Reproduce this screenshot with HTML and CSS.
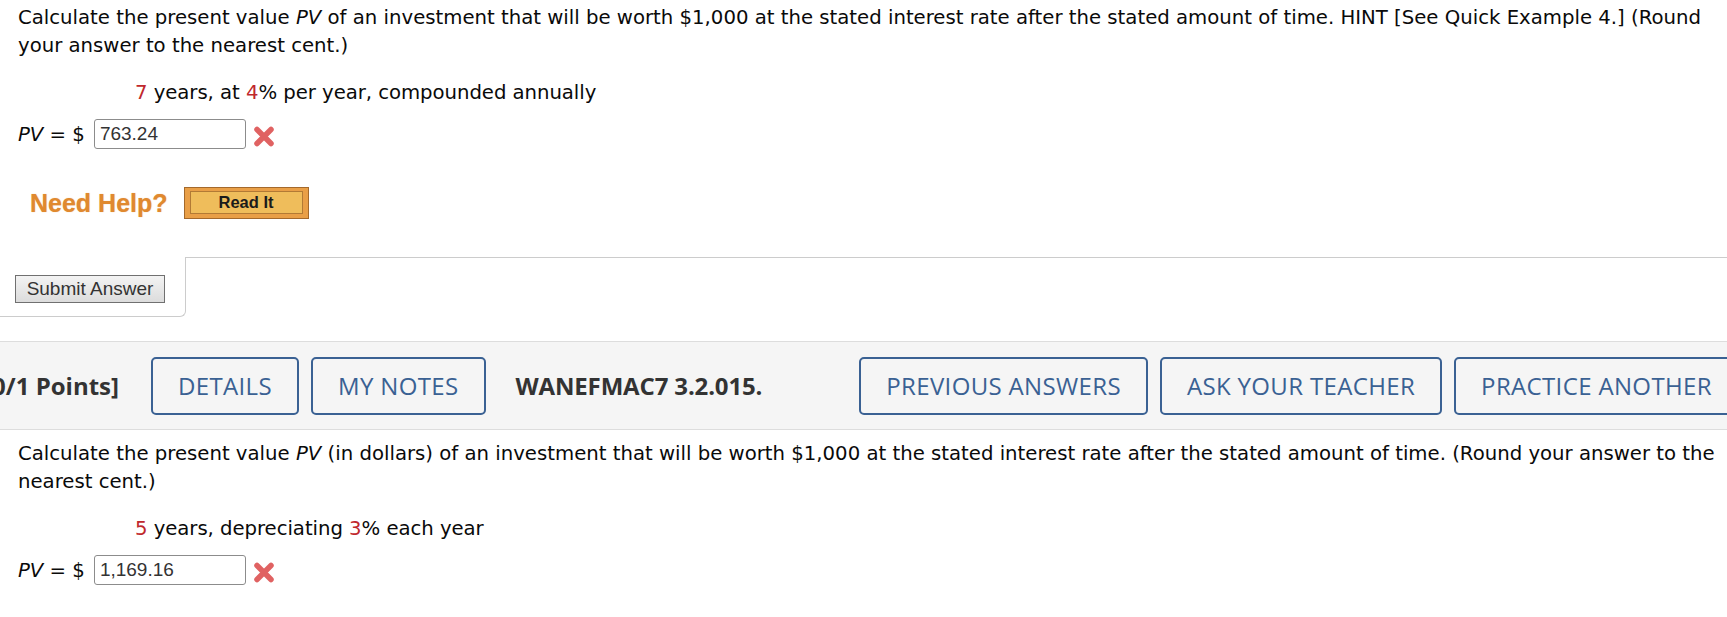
FILE: index.html
```html
<!DOCTYPE html>
<html lang="en">
<head>
<meta charset="utf-8">
<title>Present value questions</title>
<link rel="stylesheet" href="styles.css">
</head>
<body>
<section class="question q1">
  <p class="prompt">Calculate the present value <i>PV</i> of an investment that will be worth $1,000 at the stated interest rate after the stated amount of time. HINT [See Quick Example 4.] (Round your answer to the nearest cent.)</p>
  <p class="given"><span class="num">7</span> years, at <span class="num">4</span>% per year, compounded annually</p>
  <div class="answer-row">
    <span class="pv-label"><i>PV</i> = $</span>
    <span class="answer-input">763.24</span>
    <svg class="wrong-icon" width="22" height="21" viewBox="0 0 22 21" aria-hidden="true"><path d="M4 3.5 L18 17.5 M18 3.5 L4 17.5" stroke="#e06262" stroke-width="5.5" stroke-linecap="round" fill="none"/></svg>
  </div>
  <div class="help-row">
    <span class="need-help">Need Help?</span>
    <span class="read-it"><span class="read-it-inner">Read It</span></span>
  </div>
</section>

<div class="submit-row">
  <div class="submit-box"><button class="submit-btn" type="button">Submit Answer</button></div>
  <div class="submit-rest"></div>
</div>

<div class="q-bar">
  <div class="points"><span>3. [0/1 Points]</span></div>
  <span class="btn">DETAILS</span>
  <span class="btn">MY NOTES</span>
  <span class="qid">WANEFMAC7 3.2.015.</span>
  <span class="btn">PREVIOUS ANSWERS</span>
  <span class="btn">ASK YOUR TEACHER</span>
  <span class="btn">PRACTICE ANOTHER</span>
</div>

<section class="question q2">
  <p class="prompt">Calculate the present value <i>PV</i> (in dollars) of an investment that will be worth $1,000 at the stated interest rate after the stated amount of time. (Round your answer to the nearest cent.)</p>
  <p class="given"><span class="num">5</span> years, depreciating <span class="num">3</span>% each year</p>
  <div class="answer-row">
    <span class="pv-label"><i>PV</i> = $</span>
    <span class="answer-input">1,169.16</span>
    <svg class="wrong-icon" width="22" height="21" viewBox="0 0 22 21" aria-hidden="true"><path d="M4 3.5 L18 17.5 M18 3.5 L4 17.5" stroke="#e06262" stroke-width="5.5" stroke-linecap="round" fill="none"/></svg>
  </div>
</section>
</body>
</html>
```

FILE: styles.css
```css
html, body {
  margin: 0;
  padding: 0;
  background: #fff;
}
body {
  width: 1727px;
  overflow: hidden;
  font-family: "DejaVu Sans", Verdana, sans-serif;
  font-size: 19.7px;
  color: #0a0a0a;
}

.question {
  padding: 4px 0 0 18px;
}
.q2 {
  padding-top: 10px;
}
.prompt {
  margin: 0;
  line-height: 28px;
}
.given {
  margin: 19px 0 0;
  padding-left: 117px;
  line-height: 28px;
  letter-spacing: -0.05px;
}
.num {
  color: #c0282d;
}
.answer-row {
  display: flex;
  align-items: center;
  margin-top: 12px;
  height: 30px;
}
.pv-label {
  margin-right: 9px;
  white-space: nowrap;
}
.answer-input {
  box-sizing: border-box;
  width: 152px;
  height: 30px;
  border: 1px solid #8c8c8c;
  border-radius: 3px;
  padding: 0 5px;
  display: flex;
  align-items: center;
  font: 19px "Liberation Sans", Arial, sans-serif;
  color: #333;
}
.wrong-icon {
  margin-left: 7px;
  margin-top: 5px;
}

.help-row {
  display: flex;
  align-items: center;
  gap: 16px;
  margin-top: 38px;
  padding-left: 12px;
}
.need-help {
  font: bold 25px "Liberation Sans", Arial, sans-serif;
  color: #e0892f;
  text-shadow: 0 0 1px rgba(224, 137, 47, 0.6);
}
.read-it {
  box-sizing: border-box;
  width: 125px;
  height: 32px;
  border: 1px solid #a4692c;
  background: #e99f47;
  padding: 3px 5px 4px;
}
.read-it-inner {
  box-sizing: border-box;
  display: flex;
  height: 100%;
  align-items: center;
  justify-content: center;
  border: 1px solid #b27a35;
  background: #efbd5b;
  font: bold 16.5px "Liberation Sans", Arial, sans-serif;
  color: #1b1b1b;
}

.submit-row {
  display: flex;
  margin-top: 38px;
}
.submit-box {
  box-sizing: border-box;
  width: 186px;
  height: 60px;
  border-right: 1px solid #cccccc;
  border-bottom: 1px solid #cccccc;
  border-bottom-right-radius: 6px;
  padding: 18px 0 0 15px;
}
.submit-rest {
  flex: 1;
  border-top: 1px solid #cccccc;
}
.submit-btn {
  box-sizing: border-box;
  height: 28px;
  width: 150px;
  padding: 0;
  border: 1px solid #707070;
  background: linear-gradient(#f3f3f3, #dcdcdc);
  font: 19px "Liberation Sans", Arial, sans-serif;
  color: #333;
}

.q-bar {
  box-sizing: border-box;
  display: flex;
  align-items: center;
  height: 89px;
  margin-top: 24px;
  border-top: 1px solid #dddddd;
  border-bottom: 1px solid #dddddd;
  background: #f5f5f5;
  font-family: "Open Sans", sans-serif;
  font-size: 24px;
  white-space: nowrap;
}
.points {
  flex: none;
  width: 119px;
  display: flex;
  justify-content: flex-end;
  overflow: hidden;
  font-weight: bold;
  color: #333;
  margin-right: 32px;
}
.points span {
  flex: none;
}
.btn {
  flex: none;
  box-sizing: border-box;
  display: flex;
  align-items: center;
  height: 58px;
  padding: 0 25px;
  border: 2px solid #3a6193;
  border-radius: 5px;
  color: #3a6193;
  letter-spacing: 0.35px;
  margin-right: 12px;
}
.qid {
  flex: none;
  font-weight: bold;
  color: #333;
  letter-spacing: -0.15px;
  margin: 0 97px 0 18px;
}
```
